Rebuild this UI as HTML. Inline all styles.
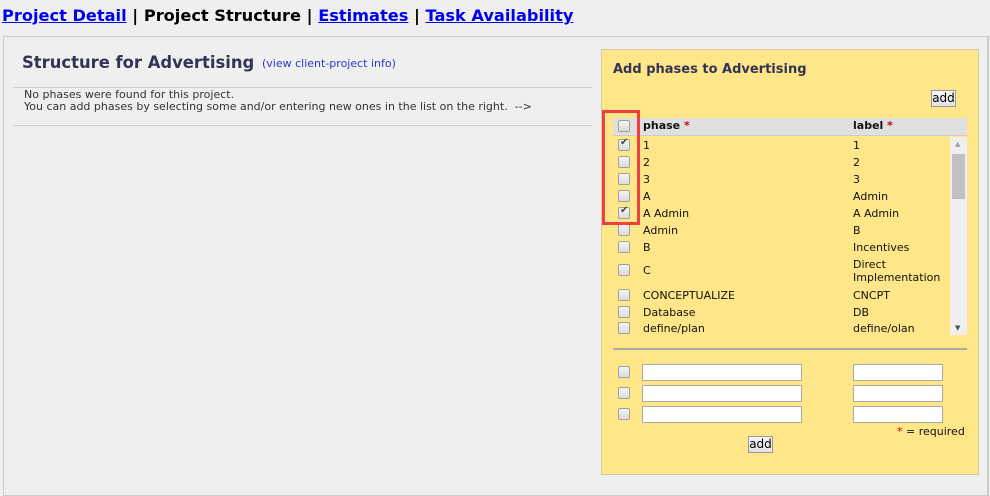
<!DOCTYPE html>
<html><head><meta charset="utf-8"><style>
*{margin:0;padding:0;box-sizing:border-box}
body{width:990px;height:476px;background:#efefef;font-family:"DejaVu Sans","Liberation Sans",sans-serif;position:relative;overflow:hidden;color:#000}
.a{position:absolute;white-space:nowrap}
.nav{left:2px;top:6px;font-size:16.2px;font-weight:bold}
.nav a{color:#0000ee;text-decoration:underline}
.box{left:3px;top:36px;width:986px;height:460px;border:1px solid #ccc;border-right:2px solid #ccc}
.h1{font-size:16.4px;font-weight:bold;color:#333355}
.sm{font-size:11px;color:#333}
.hr{height:1px;background:#ccc}
.yel{left:601px;top:49px;width:378px;height:426px;background:#ffe689;border:1px solid #d2c9a0}
.cb{position:absolute;width:12px;height:12px;border:1px solid #a0a0a0;border-radius:2px;background:linear-gradient(#f4f4f4,#dcdcdc)}
.cb.c::after{content:"✔";position:absolute;left:1px;top:-3px;font-size:10px;color:#444}
.t{font-size:11px;color:#111}
.inp{position:absolute;height:17px;background:#fff;border:1px solid #a9a9a9}
.btn{position:absolute;height:17px;background:linear-gradient(#f6f6f6,#e3e3e3);border:1px solid #999;font-size:12px;line-height:14px;text-align:center;color:#000}
</style></head><body>
<div class="a nav"><a>Project Detail</a> | Project Structure | <a>Estimates</a> | <a>Task Availability</a></div>
<div class="a box"></div>
<div class="a h1" style="left:22px;top:53px">Structure for Advertising</div>
<div class="a" style="left:262px;top:57px;font-size:11px;color:#3333cc">(view client-project info)</div>
<div class="a hr" style="left:13px;top:87px;width:579px"></div>
<div class="a sm" style="left:24px;top:89px;line-height:12px">No phases were found for this project.<br>You can add phases by selecting some and/or entering new ones in the list on the right.&nbsp; --&gt;</div>
<div class="a hr" style="left:13px;top:125px;width:579px"></div>

<div class="a yel"></div>
<div class="a h1" style="left:613px;top:62px;font-size:13px">Add phases to Advertising</div>
<div class="btn" style="left:931px;top:90px;width:25px">add</div>
<div class="a" style="left:613px;top:118px;width:354px;height:18px;background:#e0e0e0;border-bottom:1px solid #ccc"></div>
<div class="cb" style="left:618px;top:120px"></div>
<div class="a t" style="left:643px;top:119px;font-weight:bold">phase <span style="color:#c00">*</span></div>
<div class="a t" style="left:853px;top:119px;font-weight:bold">label <span style="color:#c00">*</span></div>
<div class="a" style="left:950px;top:137px;width:17px;height:198px;background:#f0f0f0"></div>
<div class="a" style="left:952px;top:154px;width:13px;height:45px;background:#c1c1c1"></div>
<div class="a" style="left:955px;top:140px;font-size:7px;color:#a3a3a3">▲</div>
<div class="a" style="left:955px;top:324px;font-size:7px;color:#505050">▼</div>

<div class="cb c" style="left:618px;top:139px"></div><div class="a t" style="left:643px;top:139px">1</div><div class="a t" style="left:853px;top:139px">1</div>
<div class="cb" style="left:618px;top:156px"></div><div class="a t" style="left:643px;top:156px">2</div><div class="a t" style="left:853px;top:156px">2</div>
<div class="cb" style="left:618px;top:173px"></div><div class="a t" style="left:643px;top:173px">3</div><div class="a t" style="left:853px;top:173px">3</div>
<div class="cb" style="left:618px;top:190px"></div><div class="a t" style="left:643px;top:190px">A</div><div class="a t" style="left:853px;top:190px">Admin</div>
<div class="cb c" style="left:618px;top:207px"></div><div class="a t" style="left:643px;top:207px">A Admin</div><div class="a t" style="left:853px;top:207px">A Admin</div>
<div class="cb" style="left:618px;top:224px"></div><div class="a t" style="left:643px;top:224px">Admin</div><div class="a t" style="left:853px;top:224px">B</div>
<div class="cb" style="left:618px;top:241px"></div><div class="a t" style="left:643px;top:241px">B</div><div class="a t" style="left:853px;top:241px">Incentives</div>
<div class="cb" style="left:618px;top:264px"></div><div class="a t" style="left:643px;top:264px">C</div><div class="a t" style="left:853px;top:258px;line-height:13px">Direct<br>Implementation</div>
<div class="cb" style="left:618px;top:289px"></div><div class="a t" style="left:643px;top:289px">CONCEPTUALIZE</div><div class="a t" style="left:853px;top:289px">CNCPT</div>
<div class="cb" style="left:618px;top:306px"></div><div class="a t" style="left:643px;top:306px">Database</div><div class="a t" style="left:853px;top:306px">DB</div>
<div class="cb" style="left:618px;top:322px"></div><div class="a t" style="left:643px;top:322px">define/plan</div><div class="a t" style="left:853px;top:322px">define/olan</div>

<div class="a" style="left:613px;top:348px;width:354px;height:2px;background:#aaa"></div>
<div class="cb" style="left:618px;top:366px"></div><div class="inp" style="left:642px;top:364px;width:160px"></div><div class="inp" style="left:853px;top:364px;width:90px"></div>
<div class="cb" style="left:618px;top:387px"></div><div class="inp" style="left:642px;top:385px;width:160px"></div><div class="inp" style="left:853px;top:385px;width:90px"></div>
<div class="cb" style="left:618px;top:408px"></div><div class="inp" style="left:642px;top:406px;width:160px"></div><div class="inp" style="left:853px;top:406px;width:90px"></div>
<div class="a t" style="left:897px;top:425px"><span style="color:#c00">*</span> = required</div>
<div class="btn" style="left:748px;top:436px;width:25px">add</div>

<div class="a" style="left:602px;top:110px;width:38px;height:115px;border:3px solid #ee4040"></div>
</body></html>
